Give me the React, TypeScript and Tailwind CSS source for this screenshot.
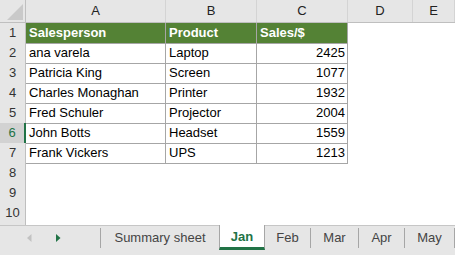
import React from 'react';

const cols = 'grid grid-cols-[26px_140px_91px_91px_65px_1fr]';

const data = [
  ['ana varela', 'Laptop', '2425'],
  ['Patricia King', 'Screen', '1077'],
  ['Charles Monaghan', 'Printer', '1932'],
  ['Fred Schuler', 'Projector', '2004'],
  ['John Botts', 'Headset', '1559'],
  ['Frank Vickers', 'UPS', '1213'],
];

function RowHead({ n, active }: { n?: number; active?: boolean }) {
  return (
    <div
      className={
        active
          ? 'flex items-center justify-center bg-[#d2d2d2] text-[#217346] border-b border-[#d4d4d4] border-r-2 border-r-[#217346]'
          : 'flex items-center justify-center bg-[#e6e6e6] text-[#333] border-b border-[#d4d4d4] border-r border-r-[#bfbfbf]'
      }
    >
      {n}
    </div>
  );
}

export default function App() {
  return (
    <div className="flex h-[255px] w-[455px] flex-col overflow-hidden bg-white font-['Liberation_Sans',Arial,sans-serif] text-[13px] text-black">
      {/* Grid */}
      <div className="h-[225px] overflow-hidden">
        <div className={`${cols} h-[23px] border-b border-[#bfbfbf] bg-[#e6e6e6] text-[#222]`}>
          <div className="relative border-r border-[#bfbfbf]">
            <svg className="absolute right-[2px] bottom-[2px]" width="16" height="16" viewBox="0 0 16 16">
              <polygon points="16,0 16,16 0,16" fill="#c9c9c9" />
            </svg>
          </div>
          {['A', 'B', 'C', 'D', 'E'].map((l) => (
            <div key={l} className="flex items-center justify-center border-r border-[#d4d4d4]">
              {l}
            </div>
          ))}
        </div>

        {/* header row of table */}
        <div className={`${cols} h-[20px]`}>
          <RowHead n={1} />
          <div className="flex items-center border-r border-b border-[#a6a6a6] bg-[#548235] pl-[3px] font-bold text-white">Salesperson</div>
          <div className="flex items-center border-r border-b border-[#a6a6a6] bg-[#548235] pl-[3px] font-bold text-white">Product</div>
          <div className="flex items-center border-r border-b border-[#a6a6a6] bg-[#548235] pl-[3px] font-bold text-white">Sales/$</div>
          <div />
          <div />
        </div>

        {data.map((r, i) => (
          <div key={i} className={`${cols} h-[20px]`}>
            <RowHead n={i + 2} active={i === 4} />
            <div className="flex items-center border-r border-b border-[#a6a6a6] pl-[3px]">{r[0]}</div>
            <div className="flex items-center border-r border-b border-[#a6a6a6] pl-[3px]">{r[1]}</div>
            <div className="flex items-center justify-end border-r border-b border-[#a6a6a6] pr-[2px]">{r[2]}</div>
            <div />
            <div />
          </div>
        ))}

        {[8, 9, 10].map((n) => (
          <div key={n} className={`${cols} h-[20px]`}>
            <RowHead n={n} />
          </div>
        ))}
        {/* partly hidden row 11 */}
        <div className={`${cols} h-[20px]`}>
          <RowHead />
        </div>
      </div>

      {/* Sheet tabs */}
      <div className="flex h-[30px] border-t border-[#c6c6c6] bg-[#e6e6e6] text-[#444]">
        <div className="flex h-[24px] w-[100px] items-center">
          <svg className="ml-[27px]" width="5" height="8" viewBox="0 0 5 8">
            <polygon points="4.5,0 0,4 4.5,8" fill="#c2c2c2" />
          </svg>
          <svg className="ml-[24px]" width="5" height="8" viewBox="0 0 5 8">
            <polygon points="0,0 4.5,4 0,8" fill="#217346" />
          </svg>
        </div>
        <div className="mt-[2px] h-[20px] w-px bg-[#a6a6a6]" />
        <div className="flex h-[24px] w-[118px] items-center justify-center">Summary sheet</div>
        <div className="-mt-px flex h-[25px] w-[46px] items-center justify-center border-x border-x-[#a6a6a6] border-b-[3px] border-b-[#217346] bg-white pt-[2px] font-bold text-[#217346]">
          Jan
        </div>
        <div className="flex h-[24px] w-[45px] items-center justify-center">Feb</div>
        <div className="mt-[2px] h-[20px] w-px bg-[#a6a6a6]" />
        <div className="flex h-[24px] w-[47px] items-center justify-center">Mar</div>
        <div className="mt-[2px] h-[20px] w-px bg-[#a6a6a6]" />
        <div className="flex h-[24px] w-[45px] items-center justify-center">Apr</div>
        <div className="mt-[2px] h-[20px] w-px bg-[#a6a6a6]" />
        <div className="flex h-[24px] w-[49px] items-center justify-center">May</div>
        <div className="mt-[2px] h-[20px] w-px bg-[#a6a6a6]" />
      </div>
    </div>
  );
}
